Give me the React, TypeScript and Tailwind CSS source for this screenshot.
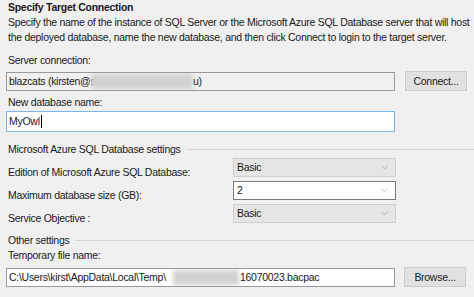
import { ChevronDown } from "lucide-react";

const font = { fontFamily: '"Liberation Sans", Arial, sans-serif' };

function Combo({ value, white }: { value: string; white?: boolean }) {
  return (
    <div
      className={`w-[163px] h-[19px] flex items-center justify-between pl-[3px] pr-[5px] border ${
        white ? "bg-white border-[#7a7a7a]" : "bg-[#e5e5e5] border-[#cfcfcf]"
      }`}
    >
      <span>{value}</span>
      <ChevronDown size={11} strokeWidth={1.2} className="text-[#8a8a8a]" />
    </div>
  );
}

function Section({ title }: { title: string }) {
  return (
    <div className="flex items-center h-[15px] pl-[2px] gap-[6px]">
      <span>{title}</span>
      <div className="flex-1 h-px bg-[#d5d5d5]" />
    </div>
  );
}

export default function App() {
  return (
    <div
      className="w-[474px] h-[297px] bg-[#f0f0f0] text-[10.5px] leading-[15px] tracking-[-0.28px] text-[#1a1a1a] pl-[6px] overflow-hidden"
      style={font}
    >
      <div className="pl-[2px] whitespace-nowrap">
        <div className="font-bold">Specify Target Connection</div>
        <div>
          Specify the name of the instance of SQL Server or the Microsoft Azure SQL Database server that will host
          <br />
          the deployed database, name the new database, and then click Connect to login to the target server.
        </div>
      </div>

      <div className="mt-[8px] pl-[2px] h-[15px]">Server connection:</div>
      <div className="mt-[3px] flex items-center gap-[10px]">
        <div className="w-[389px] h-[19px] border border-[#9a9a9a] bg-[#f0f0f0] flex items-center pl-[2px] relative overflow-hidden">
          <span>blazcats (kirsten@s</span>
          <span className="absolute left-[84px] top-[1px] w-[102px] h-[15px] bg-[#d2d2d2] blur-[2px]" />
          <span className="absolute left-[186px]">u)</span>
        </div>
        <div className="w-[62px] h-[20px] bg-[#e1e1e1] border border-[#cdcdcd] flex items-center justify-center">
          Connect...
        </div>
      </div>

      <div className="mt-[4px] pl-[2px] h-[15px]">New database name:</div>
      <div className="mt-[1px] w-[389px] h-[21px] border border-[#7eb4ea] bg-white flex items-center pl-[2px]">
        <span>MyOwl</span>
        <span className="w-px h-[13px] bg-black ml-px" />
      </div>

      <div className="mt-[10px]">
        <Section title="Microsoft Azure SQL Database settings" />
      </div>

      <div className="mt-[1px] flex flex-col gap-[4px]">
        <div className="flex items-end">
          <span className="w-[227px] pl-[2px] mb-[-3px]">Edition of Microsoft Azure SQL Database:</span>
          <Combo value="Basic" />
        </div>
        <div className="flex items-end">
          <span className="w-[227px] pl-[2px] mb-[-3px]">Maximum database size (GB):</span>
          <Combo value="2" white />
        </div>
        <div className="flex items-end">
          <span className="w-[227px] pl-[2px] mb-[-3px]">Service Objective :</span>
          <Combo value="Basic" />
        </div>
      </div>

      <div className="mt-[10px]">
        <Section title="Other settings" />
      </div>
      <div className="pl-[2px] h-[15px]">Temporary file name:</div>
      <div className="mt-[4px] flex items-center gap-[9px]">
        <div className="w-[389px] h-[19px] border border-[#9a9a9a] bg-white flex items-center pl-[2px] relative overflow-hidden">
          <span>C:\Users\kirst\AppData\Local\Temp\</span>
          <span className="absolute left-[166px] top-[1px] w-[66px] h-[15px] bg-[#d2d2d2] blur-[2px]" />
          <span className="absolute left-[233px]">16070023.bacpac</span>
        </div>
        <div className="w-[62px] h-[20px] bg-[#e1e1e1] border border-[#cdcdcd] flex items-center justify-center">
          Browse...
        </div>
      </div>
    </div>
  );
}
